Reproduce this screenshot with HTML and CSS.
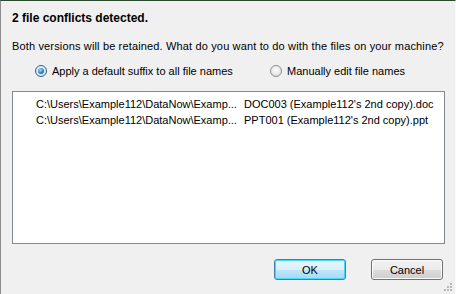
FILE: index.html
```html
<!DOCTYPE html>
<html>
<head>
<meta charset="utf-8">
<link rel="stylesheet" href="styles.css">
</head>
<body>
<div class="dialog">
  <div class="title">2 file conflicts detected.</div>
  <div class="message">Both versions will be retained. What do you want to do with the files on your machine?</div>
  <div class="options">
    <label class="option opt-first"><span class="radio checked"><span class="dot"></span></span>Apply a default suffix to all file names</label>
    <label class="option"><span class="radio"></span>Manually edit file names</label>
  </div>
  <div class="list">
    <div class="row"><span class="col-path">C:\Users\Example112\DataNow\Examp...</span><span class="col-name">DOC003 (Example112's 2nd copy).doc</span></div>
    <div class="row"><span class="col-path">C:\Users\Example112\DataNow\Examp...</span><span class="col-name">PPT001 (Example112's 2nd copy).ppt</span></div>
  </div>
  <div class="buttons">
    <div class="btn btn-default">OK</div>
    <div class="btn">Cancel</div>
  </div>
  <div class="grip"><span></span></div>
</div>
</body>
</html>
```
FILE: styles.css
```css
* { box-sizing: border-box; }
html, body { margin: 0; padding: 0; }
body {
  width: 456px;
  height: 294px;
  background: #f0f0f0;
  font-family: "Liberation Sans", Arial, sans-serif;
  font-size: 11px;
  color: #000;
  overflow: hidden;
}
.dialog {
  position: relative;
  width: 456px;
  height: 294px;
  border-top: 1px solid #2c4a2c;
  border-left: 1px solid #8c8c8c;
  border-right: 1px solid #fafafa;
  display: flex;
  flex-direction: column;
  padding: 0 0 0 11px;
}
.title {
  font-weight: bold;
  font-size: 12px;
  margin-top: 9px;
  line-height: 16px;
}
.message {
  margin-top: 13px;
  line-height: 14px;
  letter-spacing: 0.15px;
}
.options {
  display: flex;
  align-items: center;
  margin-top: 11px;
  padding-left: 23px;
  height: 14px;
}
.option {
  display: flex;
  align-items: center;
  gap: 5px;
}
.opt-first { width: 235px; }
.radio {
  width: 12px;
  height: 12px;
  border-radius: 50%;
  border: 1px solid #8e8f8f;
  background: radial-gradient(circle at 50% 40%, #fdfdfd 0%, #e6e6e6 60%, #d2d2d2 100%);
  display: flex;
  align-items: center;
  justify-content: center;
}
.radio.checked { border-color: #2c628b; }
.dot {
  width: 6px;
  height: 6px;
  border-radius: 50%;
  background: radial-gradient(circle at 40% 35%, #9fe0ff 0%, #2a8ad4 50%, #0d3f73 100%);
}
.list {
  margin-top: 13px;
  width: 433px;
  height: 153px;
  background: #fff;
  border: 1px solid #828790;
  padding: 4px 0 0 23px;
}
.row {
  display: flex;
  height: 16px;
  align-items: center;
  white-space: nowrap;
}
.col-path { width: 208px; }
.buttons {
  display: flex;
  justify-content: flex-end;
  gap: 25px;
  margin-top: 15px;
  padding-right: 12px;
}
.btn {
  width: 72px;
  height: 21px;
  border: 1px solid #707070;
  border-radius: 3px;
  background: linear-gradient(#f2f2f2 0%, #ebebeb 50%, #dddddd 51%, #cfcfcf 100%);
  box-shadow: inset 0 0 0 1px #fcfcfc;
  display: flex;
  align-items: center;
  justify-content: center;
}
.btn-default {
  border-color: #3c7fb1;
  background: linear-gradient(#eaf6fd 0%, #d9f0fc 50%, #bee6fd 51%, #a7d9f5 100%);
  box-shadow: inset 0 0 0 1px #48d8fb;
}
.grip {
  position: absolute;
  right: 3px;
  bottom: 3px;
  width: 8px;
  height: 8px;
}
.grip span {
  position: absolute;
  right: 0;
  bottom: 0;
  width: 2px;
  height: 2px;
  background: #b8b8b8;
  box-shadow: -3px 0 #b8b8b8, -6px 0 #b8b8b8, 0 -3px #b8b8b8, 0 -6px #b8b8b8, -3px -3px #b8b8b8;
}
```
